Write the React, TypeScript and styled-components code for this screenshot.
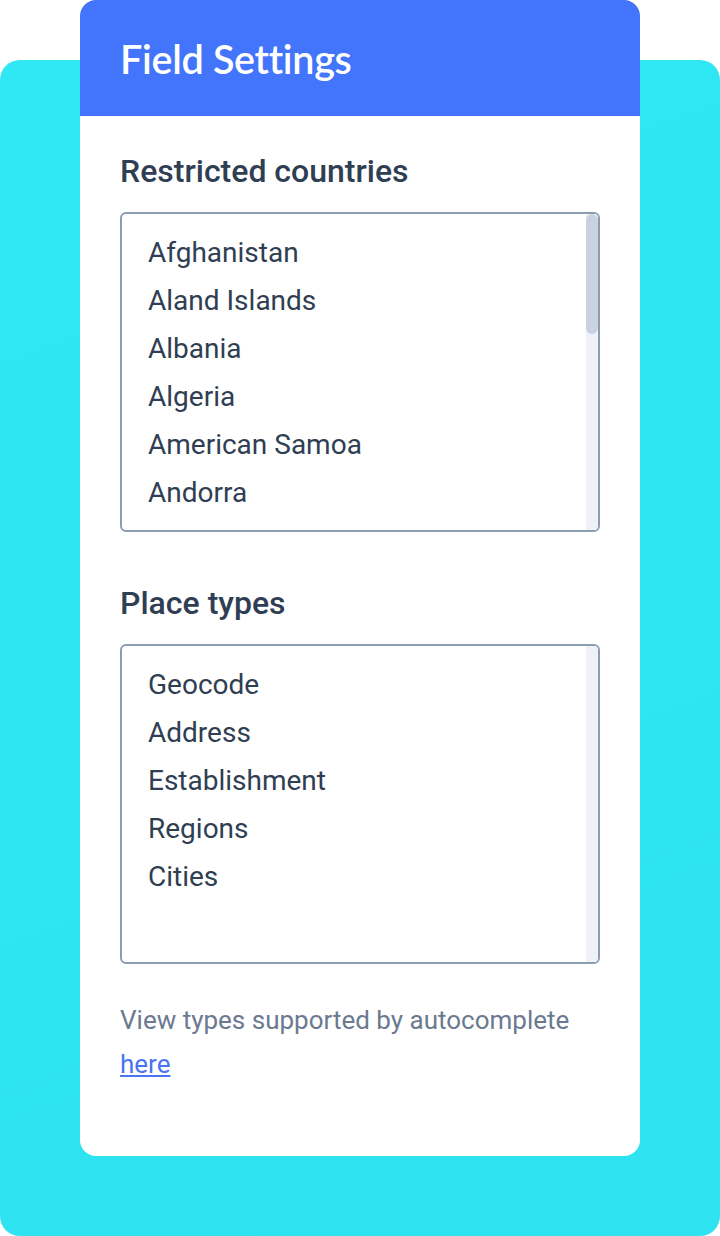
import React from 'react'
import styled, { createGlobalStyle } from 'styled-components'

const GlobalStyle = createGlobalStyle`
    html, body {
        margin: 0;
        padding: 0;
        background: #ffffff;
    }
    body {
        font-family: Roboto, "Liberation Sans", sans-serif;
    }
`

const countries = ['Afghanistan', 'Aland Islands', 'Albania', 'Algeria', 'American Samoa', 'Andorra', 'Angola', 'Anguilla', 'Antarctica']
const placeTypes = ['Geocode', 'Address', 'Establishment', 'Regions', 'Cities']

interface ListProps {
    items: string[]
    scrollable?: boolean
}

// a listbox shows six rows, the rest sits below the fold
const OptionList: React.FC<ListProps> = ({ items, scrollable = false }) => (
    <ListBox>
        <Options>
            {items.map(item => (
                <Option key={item}>{item}</Option>
            ))}
        </Options>
        <Track>
            {scrollable && <Thumb />}
        </Track>
    </ListBox>
)

export default function App() {
    return (
        <>
            <GlobalStyle />
            <Page>
                <Backdrop>
                    <Card>
                        <Header>
                            <Title>Field Settings</Title>
                        </Header>
                        <Body>
                            <Section>
                                <Label>Restricted countries</Label>
                                <OptionList items={countries} scrollable />
                            </Section>
                            <Section>
                                <Label>Place types</Label>
                                <OptionList items={placeTypes} />
                            </Section>
                            <Hint>
                                View types supported by autocomplete
                                <br />
                                <a href="#">here</a>
                            </Hint>
                        </Body>
                    </Card>
                </Backdrop>
            </Page>
        </>
    )
}

const Page = styled.div`
    width: 720px;
    padding-top: 60px;
`

const Backdrop = styled.div`
    background: linear-gradient(160deg, #2fe8f3 0%, #2ee2ef 100%);
    border-radius: 20px;
    padding: 0 80px 80px;
    display: flex;
    flex-direction: column;
`

const Card = styled.div`
    margin-top: -60px;
    background: #ffffff;
    border-radius: 16px;
    overflow: hidden;
    height: 1156px;
    display: flex;
    flex-direction: column;
`

const Header = styled.div`
    height: 116px;
    background: #4274fc;
    display: flex;
    align-items: center;
    padding: 0 40px;
    box-sizing: border-box;
`

const Title = styled.h1`
    margin: 0;
    color: #ffffff;
    font-family: Lato, "Open Sans", sans-serif;
    font-weight: 600;
    font-size: 39.5px;
    letter-spacing: -0.3px;
`

const Body = styled.div`
    padding: 36px 40px 0;
    display: flex;
    flex-direction: column;
    gap: 52px;
`

const Section = styled.div`
    display: flex;
    flex-direction: column;
    gap: 22px;
`

const Label = styled.h2`
    margin: 0;
    font-size: 32px;
    line-height: 38px;
    font-weight: 500;
    color: #2f3e52;
`

const ListBox = styled.div`
    height: 320px;
    box-sizing: border-box;
    border: 2px solid #8e9cb2;
    border-radius: 6px;
    display: flex;
    align-items: flex-start;
    overflow: hidden;
`

const Options = styled.div`
    flex: 1;
    height: 288px;
    margin-top: 15px;
    overflow: hidden;
`

const Option = styled.div`
    padding: 0 26px;
    font-size: 28px;
    line-height: 48px;
    color: #2f3e52;
    white-space: nowrap;
`

const Track = styled.div`
    width: 12px;
    align-self: stretch;
    background: #eef2f8;
    display: flex;
    flex-direction: column;
`

const Thumb = styled.div`
    height: 120px;
    background: #c8d2e0;
    border-radius: 6px;
`

const Hint = styled.p`
    margin: 0;
    margin-top: -18px;
    font-size: 26px;
    line-height: 44px;
    color: #6b7a90;

    a {
        color: #4a74f2;
    }
`
